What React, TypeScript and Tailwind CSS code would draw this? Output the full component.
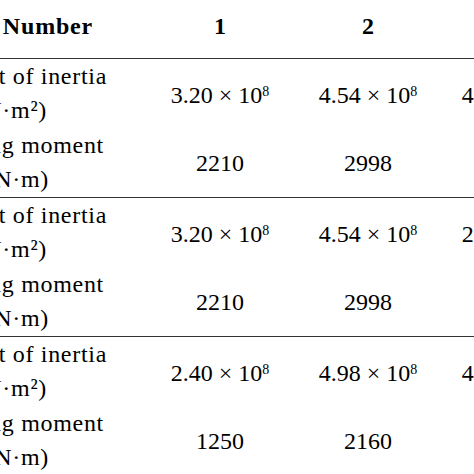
const GROUPS = [
  { inertia: ["3.20", "4.54", "4.62"], crack: ["2210", "2998", "3050"] },
  { inertia: ["3.20", "4.54", "2.91"], crack: ["2210", "2998", "1920"] },
  { inertia: ["2.40", "4.98", "4.36"], crack: ["1250", "2160", "2840"] },
];

function Label({ text, end }: { text: string; end: string }) {
  return (
    <div className={`flex justify-end whitespace-nowrap tracking-[0.7px] ${end}`}>
      <span className="shrink-0">{text}</span>
    </div>
  );
}

function Power({ base }: { base: string }) {
  return (
    <span className="whitespace-nowrap">
      {base} × 10<sup className="text-[14px]">8</sup>
    </span>
  );
}

export default function App() {
  return (
    <div
      className="w-[474px] h-[474px] overflow-hidden bg-white text-[24px] leading-[34.375px] text-black"
      style={{ fontFamily: '"Liberation Serif", "Times New Roman", serif' }}
    >
      <div className="w-[580px]">
        {/* Header */}
        <div className="grid grid-cols-[146px_148px_148px_138px] h-[59px] pt-[9px] border-b-[1.5px] border-[#333333] font-bold">
          <div className="flex justify-end w-[93px] whitespace-nowrap tracking-[0.8px]">
            <span className="shrink-0">Beam Number</span>
          </div>
          <div className="text-center">1</div>
          <div className="text-center">2</div>
          <div className="text-center">3</div>
        </div>

        {GROUPS.map((g, i) => (
          <div
            key={i}
            className="grid grid-cols-[146px_148px_148px_138px] h-[139px] border-b-[1.5px] border-[#333333]"
          >
            <div className="flex flex-col">
              <Label text="Moment of inertia" end="w-[107px]" />
              <Label text="(kN·m²)" end="w-[47px]" />
              <Label text="Cracking moment" end="w-[104px]" />
              <Label text="(kN·m)" end="w-[49px]" />
            </div>
            {[0, 1, 2].map(c => (
              <div key={c} className="flex flex-col">
                <div className="h-[68.75px] flex items-center justify-center pt-[3px]">
                  <Power base={g.inertia[c]} />
                </div>
                <div className="h-[68.75px] flex items-center justify-center pt-[3px]">
                  {g.crack[c]}
                </div>
              </div>
            ))}
          </div>
        ))}
      </div>
    </div>
  );
}
